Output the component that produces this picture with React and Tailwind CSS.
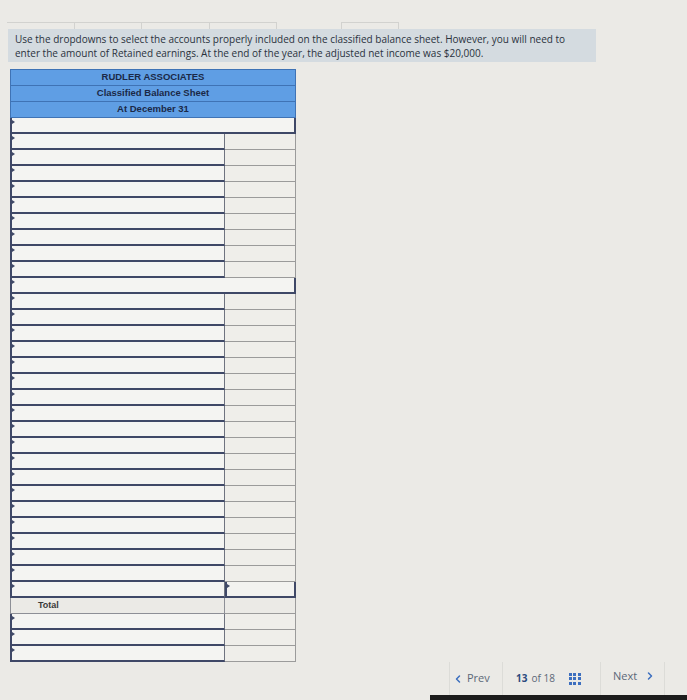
import React from 'react'
import { ChevronLeft, ChevronRight } from 'lucide-react'

const font = { fontFamily: '"Open Sans", "Liberation Sans", sans-serif' }

const Marker = () => (
  <span className="absolute left-0 top-[2px] w-0 h-0 border-y-[2px] border-y-transparent border-l-[3px] border-l-[#3f4867]" />
)

const FullRow = () => (
  <div className="relative h-[16px] bg-[#f4f4f2] border-2 border-[#3f4867] border-t-0">
    <Marker />
  </div>
)

const Row = ({ rightInput = false }) => (
  <div className="flex h-[16px]">
    <div className="relative w-[215px] bg-[#f4f4f2] border-l-2 border-b-2 border-[#3f4867] border-r border-r-[#6f7380]">
      <Marker />
    </div>
    {rightInput ? (
      <div className="relative flex-1 bg-[#f2f2f0] border-2 border-[#3f4867] border-t-0">
        <Marker />
      </div>
    ) : (
      <div className="flex-1 bg-[#efeeea] border-b border-r border-[#9b9b9b]" />
    )}
  </div>
)

const HeaderRow = ({ children }) => (
  <div className="h-[16px] bg-[#5f9ee4] border-x border-b border-[#3f73b5] flex items-center justify-center text-[9.5px] font-bold text-[#1b2947]" style={{ fontFamily: '"Liberation Sans", Arial, sans-serif' }}>
    {children}
  </div>
)

export default function App() {
  const firstRows = Array.from({ length: 9 })
  const midRows = Array.from({ length: 18 })

  return (
    <div className="w-[687px] h-[700px] bg-[#ebeae6] flex flex-col overflow-hidden" style={font}>
      {/* tab strip */}
      <div className="mt-[22px] ml-[7px] flex h-[7px]">
        <div className="w-[68px] border-t border-r border-[#d2d2cf]" />
        <div className="w-[67px] border-t border-r border-[#d2d2cf]" />
        <div className="w-[68px] border-t border-r border-[#d2d2cf]" />
        <div className="w-[67px] border-t border-r border-[#d2d2cf]" />
        <div className="w-[64px]" />
        <div className="w-[58px] border-t border-x border-[#d2d2cf]" />
      </div>

      {/* instructions */}
      <div className="ml-[8px] w-[588px] h-[34px] bg-[#d4dbe0] px-[7px] pt-[3px] text-[10px] leading-[14px] text-[#2a323d]">
        <p>Use the dropdowns to select the accounts properly included on the classified balance sheet. However, you will need to</p>
        <p>enter the amount of Retained earnings. At the end of the year, the adjusted net income was $20,000.</p>
      </div>

      {/* balance sheet */}
      <div className="mt-[7px] ml-[10px] w-[286px] flex flex-col">
        <div className="border-t border-[#3f73b5]" />
        <HeaderRow>RUDLER ASSOCIATES</HeaderRow>
        <HeaderRow>Classified Balance Sheet</HeaderRow>
        <HeaderRow>At December 31</HeaderRow>
        <FullRow />
        {firstRows.map((_, i) => <Row key={'a' + i} />)}
        <FullRow />
        {midRows.map((_, i) => <Row key={'b' + i} />)}
        <Row rightInput />
        <div className="flex h-[16px]">
          <div className="w-[215px] border-l border-b border-r border-[#8d8f96] flex items-center pl-[27px] text-[9px] font-bold text-[#3a3a3a]" style={{ fontFamily: '"Liberation Sans", Arial, sans-serif' }}>
            Total
          </div>
          <div className="flex-1 border-b border-r border-[#9b9b9b]" />
        </div>
        <Row />
        <Row />
        <Row />
      </div>

      {/* footer nav */}
      <div className="ml-[449px] flex h-[34px] mt-auto text-[#5b6878]">
        <div className="w-[53px] border-l border-[#dcdcd8] flex items-center gap-[3px] pl-[2px] text-[11px]">
          <ChevronLeft size={12} strokeWidth={3} className="text-[#3d6fbf]" />
          <span>Prev</span>
        </div>
        <div className="w-[98px] border-l border-[#dcdcd8] flex items-center pl-[13px] text-[10px]">
          <span className="font-bold text-[#2c4a7e]">13</span>
          <span className="ml-[4px]">of 18</span>
          <span className="ml-[14px] grid grid-cols-3 gap-[1.5px]">
            {Array.from({ length: 9 }).map((_, i) => (
              <span key={i} className="w-[3px] h-[3px] bg-[#3d6fbf]" />
            ))}
          </span>
        </div>
        <div className="w-[65px] border-x border-[#dcdcd8] flex items-center pl-[12px] gap-[7px] text-[11px] pb-[5px]">
          <span>Next</span>
          <ChevronRight size={12} strokeWidth={3} className="text-[#3d6fbf]" />
        </div>
      </div>
      <div className="ml-[430px] h-[5px] bg-[#1c1c1c]" />
    </div>
  )
}
